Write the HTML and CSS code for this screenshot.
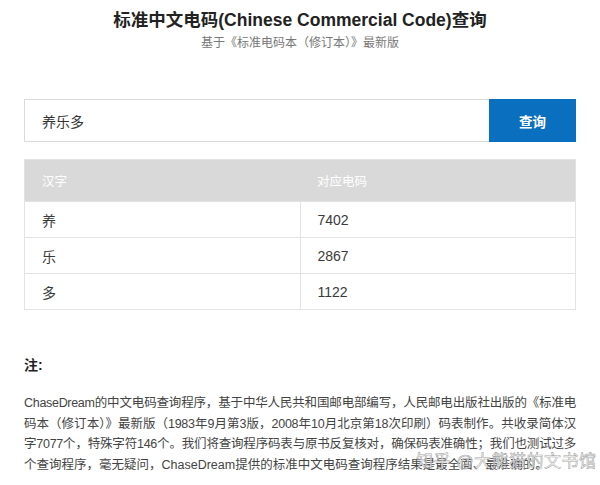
FILE: index.html
```html
<!DOCTYPE html>
<html lang="zh-CN">
<head>
<meta charset="utf-8">
<title>标准中文电码查询</title>
<link rel="stylesheet" href="styles.css">
</head>
<body>
<div class="page">
  <header class="head">
    <h1 class="title">标准中文电码(Chinese Commercial Code)查询</h1>
    <p class="subtitle">基于《标准电码本（修订本）》最新版</p>
  </header>

  <form class="search">
    <div class="search-input">养乐多</div>
    <button type="button" class="search-btn">查询</button>
  </form>

  <table class="codes">
    <thead>
      <tr><th>汉字</th><th>对应电码</th></tr>
    </thead>
    <tbody>
      <tr><td>养</td><td>7402</td></tr>
      <tr><td>乐</td><td>2867</td></tr>
      <tr><td>多</td><td>1122</td></tr>
    </tbody>
  </table>

  <h2 class="note-title">注:</h2>
  <p class="note">
    <span class="ln j">ChaseDream的中文电码查询程序，基于中华人民共和国邮电部编写，人民邮电出版社出版的《标准电</span>
    <span class="ln j">码本（修订本）》最新版（1983年9月第3版，2008年10月北京第18次印刷）码表制作。共收录简体汉</span>
    <span class="ln j">字7077个，特殊字符146个。我们将查询程序码表与原书反复核对，确保码表准确性；我们也测试过多</span>
    <span class="ln">个查询程序，毫无疑问，ChaseDream提供的标准中文电码查询程序结果是最全面、最准确的。</span>
  </p>
  <span class="watermark">知乎 @大熊猫的文书馆</span>
</div>
</body>
</html>
```

FILE: styles.css
```css
* { box-sizing: border-box; }
html, body { margin: 0; padding: 0; background: #fff; }
body {
  font-family: "Liberation Sans", "Noto Sans CJK SC", sans-serif;
  color: #333;
}
.page {
  position: relative;
  width: 600px;
  height: 485px;
  overflow: hidden;
  padding: 0 24px;
}
.head { text-align: center; }
.title {
  margin: 8px 0 0;
  font-size: 17.5px;
  line-height: 24px;
  font-weight: bold;
  color: #222;
}
.subtitle {
  margin: 2px 0 0;
  font-size: 12px;
  line-height: 18px;
  color: #777;
}
.search {
  display: flex;
  margin: 47px 0 0;
  height: 43px;
}
.search-input {
  flex: 1;
  border: 1px solid #dadada;
  border-right: none;
  padding: 0 17px;
  display: flex;
  align-items: center;
  font-size: 14px;
  color: #333;
}
.search-btn {
  width: 87px;
  border: none;
  background: #0b6fbf;
  color: #fff;
  font-family: inherit;
  font-size: 13.5px;
  font-weight: bold;
  padding: 0;
}
.codes {
  width: 100%;
  margin-top: 17px;
  border-collapse: collapse;
  border: 1px solid #e3e3e3;
  table-layout: fixed;
}
.codes th {
  background: #d9d9d9;
  color: #fff;
  font-weight: normal;
  font-size: 12.5px;
  text-align: left;
  height: 42px;
  padding: 0 0 0 17px;
}
.codes td {
  height: 36px;
  padding: 0 0 0 17px;
  font-size: 14px;
  color: #3a3a3a;
  border-top: 1px solid #e3e3e3;
}
.codes td:first-child { border-right: 1px solid #e3e3e3; width: 50%; }
.codes th:first-child { width: 50%; }
.note-title {
  margin: 45px 0 0;
  font-size: 14px;
  line-height: 20px;
  font-weight: bold;
  color: #222;
}
.note {
  margin: 18px 0 0;
  font-size: 12.5px;
  line-height: 20.7px;
  color: #444;
}
.ln { display: block; white-space: nowrap; }
.ln.j { text-align: justify; text-align-last: justify; letter-spacing: -0.3px; }
.watermark {
  position: absolute;
  left: 416px;
  top: 451px;
  font-size: 17px;
  line-height: 22px;
  color: rgba(255,255,255,0.85);
  -webkit-text-stroke: 0.6px rgba(120,120,120,0.7);
  letter-spacing: 0.5px;
  white-space: nowrap;
}
```
